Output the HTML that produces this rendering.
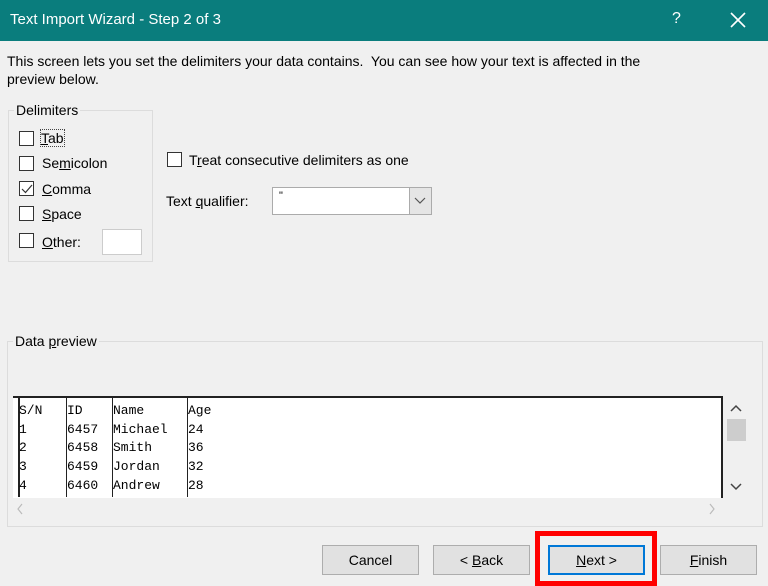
<!DOCTYPE html>
<html><head><style>
*{margin:0;padding:0;box-sizing:border-box}
body{width:768px;height:586px;background:#f0f0f0;position:relative;overflow:hidden;font-family:"Liberation Sans",sans-serif;font-size:14px;color:#000}
.a{position:absolute;white-space:nowrap}
.cb{position:absolute;width:15px;height:15px;border:1px solid #333;background:#fff}
.gb{position:absolute;border:1px solid #dcdcdc}
.btn{position:absolute;height:30px;width:97px;background:#e1e1e1;border:1px solid #adadad;text-align:center;line-height:28px;font-size:14px}
.mono{font-family:"Liberation Mono",monospace;font-size:13px}
u{text-decoration:underline}
</style></head><body>
<div class="a" style="left:0;top:0;width:768px;height:41px;background:#0a7d7d"></div>
<div class="a" style="left:10px;top:11px;color:#fff;font-size:15px">Text Import Wizard - Step 2 of 3</div>
<div class="a" style="left:672px;top:10px;color:#fff;font-size:16px">?</div>
<svg class="a" style="left:730px;top:12px" width="16" height="16"><path d="M1 1L15 15M15 1L1 15" stroke="#fff" stroke-width="1.6"/></svg>
<div class="a" style="left:7px;top:52px;line-height:18px">This screen lets you set the delimiters your data contains.&nbsp; You can see how your text is affected in the<br>preview below.</div>

<div class="gb" style="left:8px;top:110px;width:145px;height:152px"></div>
<div class="a" style="left:14px;top:102px;background:#f0f0f0;padding:0 2px">Delimiters</div>
<div class="cb" style="left:19px;top:131px"></div><div class="a" style="left:41px;top:130px;outline:1px dotted #444"><u>T</u>ab</div>
<div class="cb" style="left:19px;top:156px"></div><div class="a" style="left:42px;top:155px">Se<u>m</u>icolon</div>
<div class="cb" style="left:19px;top:181px"></div>
<svg class="a" style="left:21px;top:183px" width="12" height="12"><path d="M1 6L4.5 9.5L11 2" stroke="#333" fill="none" stroke-width="1.2"/></svg>
<div class="a" style="left:42px;top:181px"><u>C</u>omma</div>
<div class="cb" style="left:19px;top:206px"></div><div class="a" style="left:42px;top:206px"><u>S</u>pace</div>
<div class="cb" style="left:19px;top:233px"></div><div class="a" style="left:42px;top:234px"><u>O</u>ther:</div>
<div class="a" style="left:102px;top:229px;width:40px;height:26px;background:#fff;border:1px solid #ccc"></div>

<div class="cb" style="left:167px;top:152px"></div><div class="a" style="left:189px;top:152px">T<u>r</u>eat consecutive delimiters as one</div>
<div class="a" style="left:166px;top:193px">Text <u>q</u>ualifier:</div>
<div class="a" style="left:272px;top:187px;width:160px;height:28px;background:#fff;border:1px solid #ababab"></div>
<div class="a" style="left:279px;top:190px;font-size:11px">"</div>
<div class="a" style="left:409px;top:188px;width:22px;height:26px;background:#e5e5e5;border-left:1px solid #ababab"></div>
<svg class="a" style="left:414px;top:197px" width="12" height="8"><path d="M1 1L6 6L11 1" stroke="#555" fill="none" stroke-width="1.2"/></svg>

<div class="gb" style="left:7px;top:341px;width:756px;height:186px"></div>
<div class="a" style="left:13px;top:333px;background:#f0f0f0;padding:0 2px">Data <u>p</u>review</div>
<div class="a" style="left:13px;top:396px;width:710px;height:102px;background:#fff;border-top:2px solid #222;border-right:2px solid #222"></div>
<div class="a" style="left:18px;top:398px;width:2px;height:99px;background:#222"></div>
<div class="a" style="left:66px;top:398px;width:1px;height:99px;background:#222"></div>
<div class="a" style="left:112px;top:398px;width:1px;height:99px;background:#222"></div>
<div class="a" style="left:187px;top:398px;width:1px;height:99px;background:#222"></div>
<div class="a mono" style="left:19px;top:402px;line-height:18.7px">S/N<br>1<br>2<br>3<br>4</div>
<div class="a mono" style="left:67px;top:402px;line-height:18.7px">ID<br>6457<br>6458<br>6459<br>6460</div>
<div class="a mono" style="left:113px;top:402px;line-height:18.7px">Name<br>Michael<br>Smith<br>Jordan<br>Andrew</div>
<div class="a mono" style="left:188px;top:402px;line-height:18.7px">Age<br>24<br>36<br>32<br>28</div>
<svg class="a" style="left:730px;top:404px" width="12" height="8"><path d="M1 7L6 2L11 7" stroke="#444" fill="none" stroke-width="1.5"/></svg>
<div class="a" style="left:727px;top:419px;width:19px;height:22px;background:#cdcdcd"></div>
<svg class="a" style="left:730px;top:483px" width="12" height="8"><path d="M1 1L6 6L11 1" stroke="#444" fill="none" stroke-width="1.5"/></svg>
<svg class="a" style="left:16px;top:503px" width="8" height="12"><path d="M6 1L2 6L6 11" stroke="#bbb" fill="none" stroke-width="1.2"/></svg>
<svg class="a" style="left:708px;top:503px" width="8" height="12"><path d="M2 1L6 6L2 11" stroke="#bbb" fill="none" stroke-width="1.2"/></svg>

<div class="btn" style="left:322px;top:545px">Cancel</div>
<div class="btn" style="left:433px;top:545px">&lt; <u>B</u>ack</div>
<div class="btn" style="left:548px;top:545px;border:2px solid #0078d7;line-height:26px"><u>N</u>ext &gt;</div>
<div class="btn" style="left:660px;top:545px"><u>F</u>inish</div>
<div class="a" style="left:535px;top:531px;width:122px;height:55px;border:5px solid #f00"></div>
</body></html>
